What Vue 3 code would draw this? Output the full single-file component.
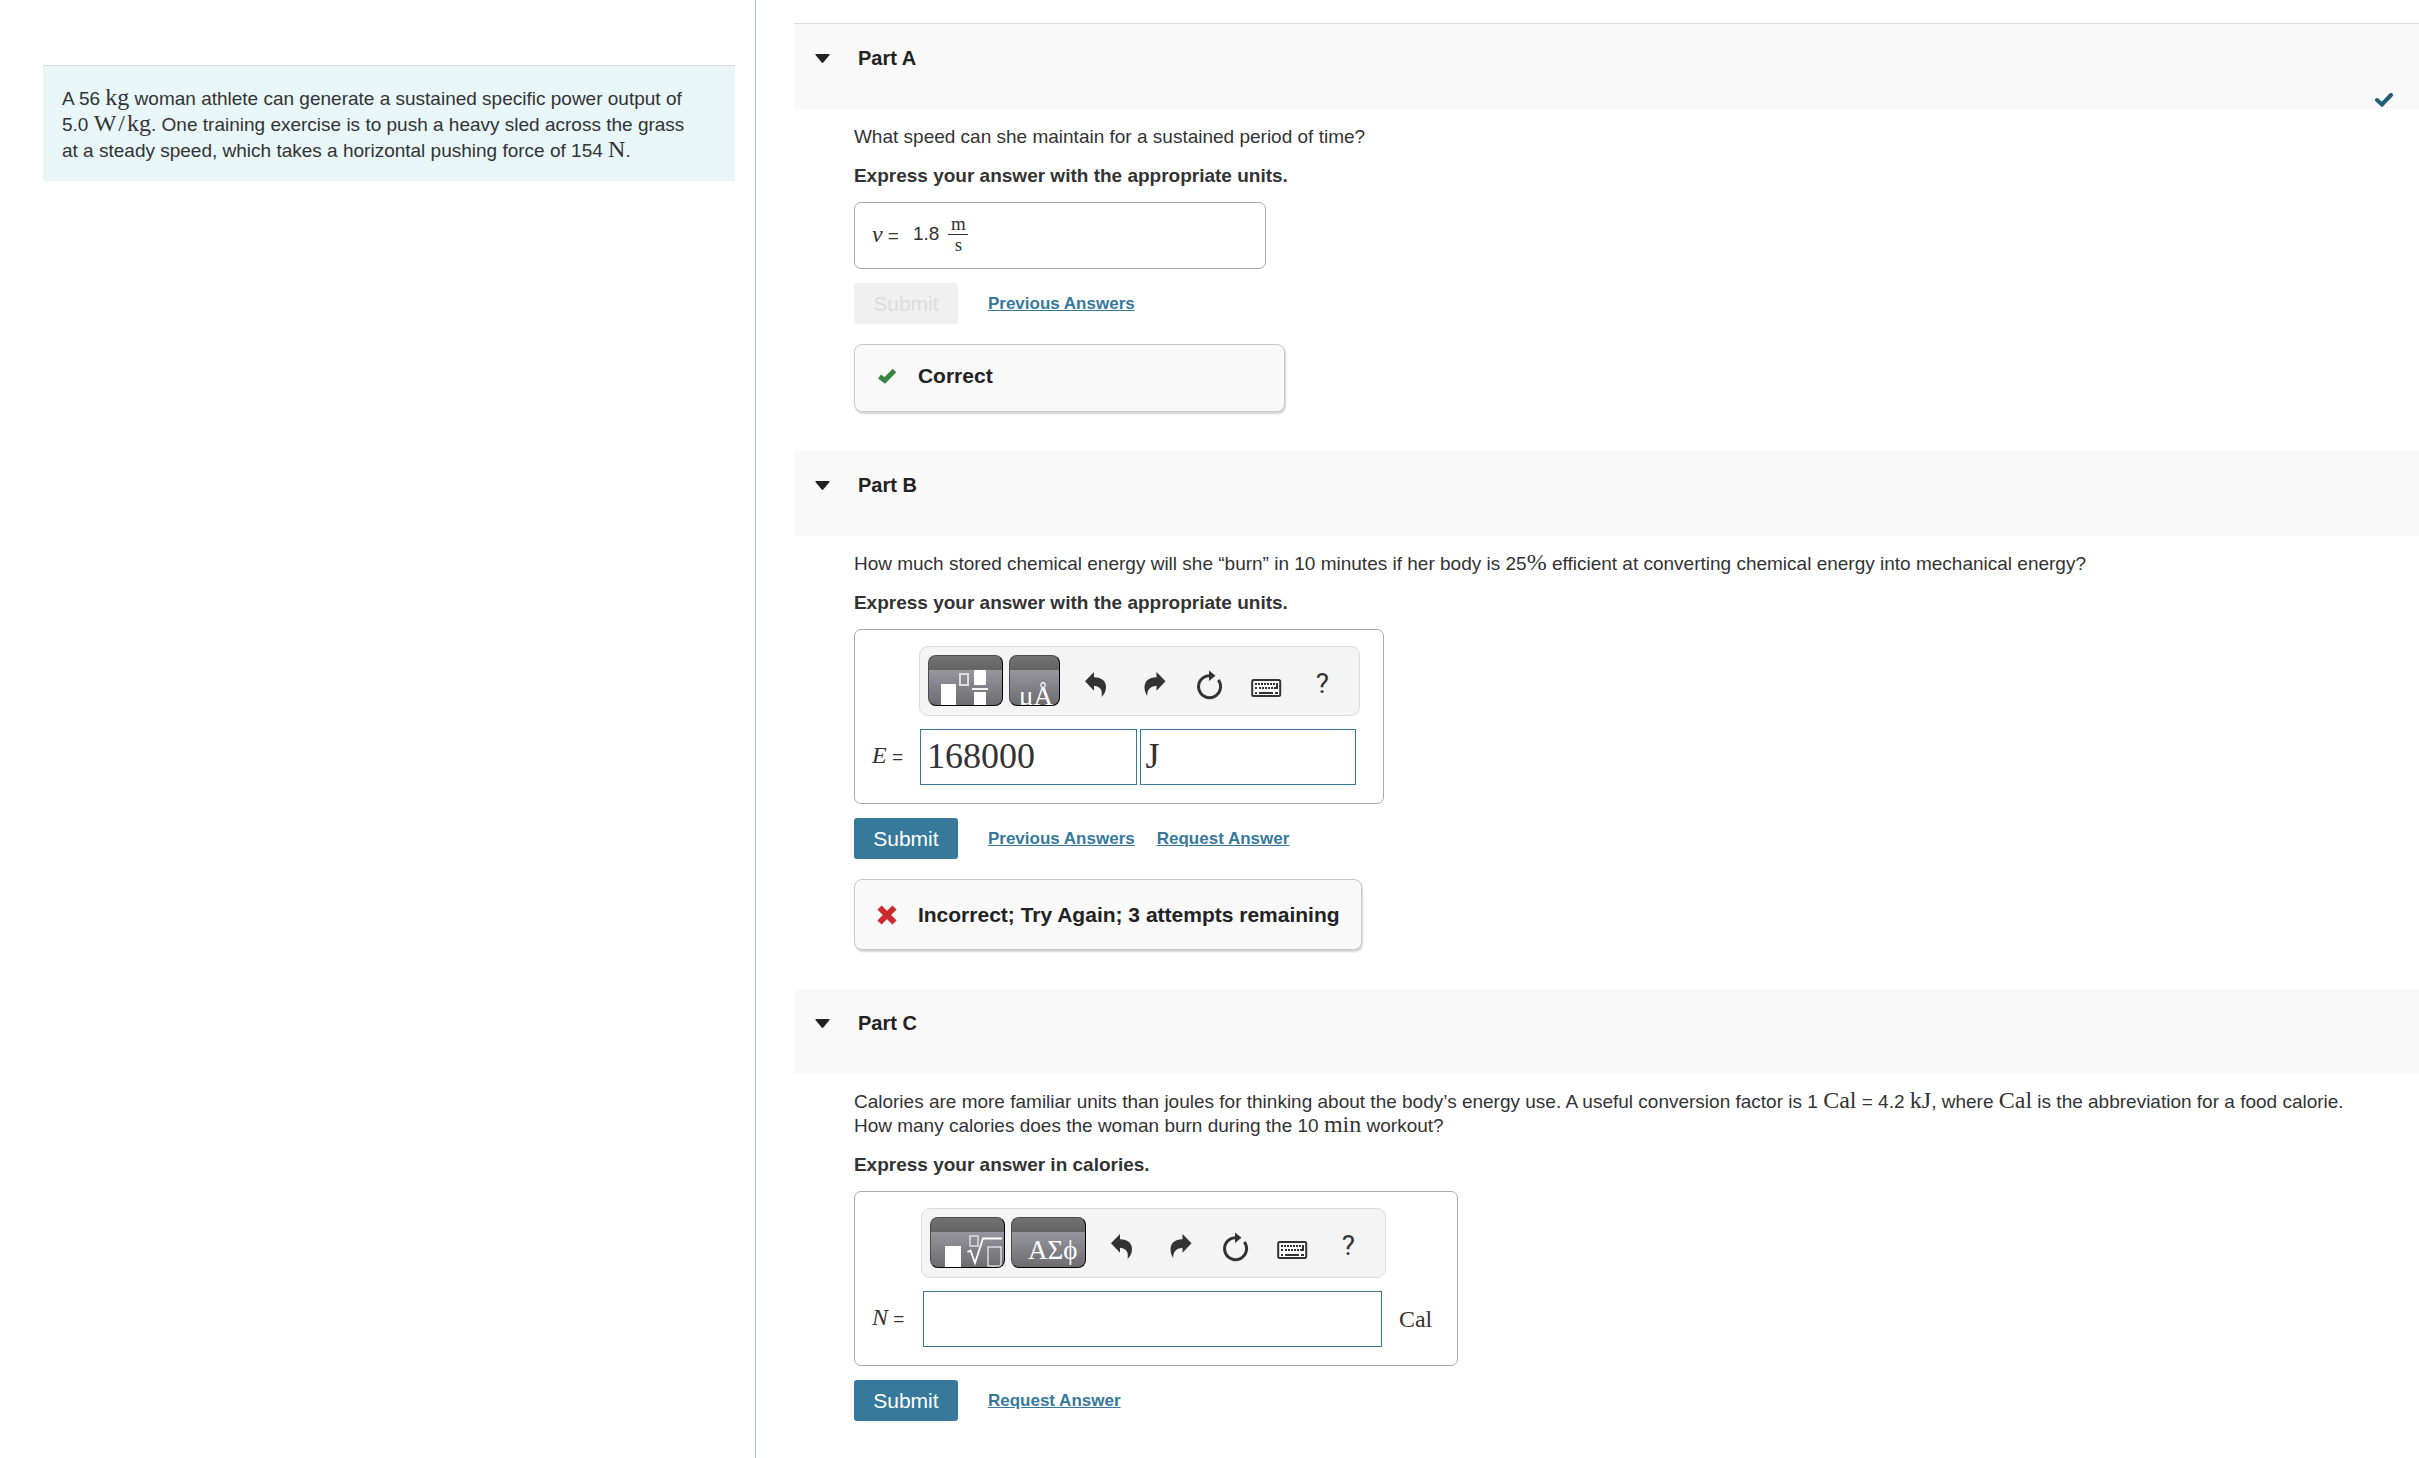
<script setup>
import { ref } from 'vue'

const energyValue = ref('168000')
const energyUnit = ref('J')
const calories = ref('')

const parts = [
  { id: 'a', title: 'Part A', done: true },
  { id: 'b', title: 'Part B', done: false },
  { id: 'c', title: 'Part C', done: false },
]
const tools = ['Undo', 'Redo', 'Reset', 'Keyboard shortcuts']
const keyRows = [
  { y: 28, xs: [18, 21, 24, 27, 30, 33, 36] },
  { y: 32, xs: [18, 22, 25, 28, 31, 34] },
  { y: 37, xs: [18] },
]
</script>

<template>
  <div class="page">
    <aside class="intro">
      <p class="problem">
        A 56 <span class="math">kg</span> woman athlete can generate a sustained specific power output of
        5.0 <span class="math">W<span class="slash">/</span>kg</span>. One training exercise is to push a heavy sled across the grass
        at a steady speed, which takes a horizontal pushing force of 154 <span class="math">N</span>.
      </p>
    </aside>

    <main class="parts">
      <section v-for="part in parts" :key="part.id" class="part">
        <header class="part-head" :class="{ first: part.id === 'a' }">
          <h2>
            <button type="button" class="toggle" aria-expanded="true">
              <svg width="15" height="9" viewBox="0 0 15 9" aria-hidden="true"><path d="M1 0h13q1 0 .5 1L8.300 8.500q-.8.8-1.600 0L.5 1Q0 0 1 0z" fill="#222" /></svg>
              {{ part.title }}
            </button>
          </h2>
          <svg v-if="part.done" class="done" width="18" height="14" viewBox="0 0 18 14" role="img" aria-label="Completed">
            <path d="M2 7l5 4.500L16 2" fill="none" stroke="#225f77" stroke-width="4" stroke-linecap="round" />
          </svg>
        </header>

        <div class="part-body">
          <p v-if="part.id === 'a'" class="question">What speed can she maintain for a sustained period of time?</p>
          <p v-else-if="part.id === 'b'" class="question">
            How much stored chemical energy will she “burn” in 10 minutes if her body is 25<span class="math">%</span> efficient at converting chemical energy into mechanical energy?
          </p>
          <p v-else class="question">
            Calories are more familiar units than joules for thinking about the body’s energy use. A useful conversion factor is 1 <span class="math">Cal</span> = 4.2 <span class="math">kJ</span>, where <span class="math">Cal</span> is the abbreviation for a food calorie.<br />
            How many calories does the woman burn during the 10 <span class="math">min</span> workout?
          </p>
          <p class="instruction">
            {{ part.id === 'c' ? 'Express your answer in calories.' : 'Express your answer with the appropriate units.' }}
          </p>

          <div v-if="part.id === 'a'" class="answer fixed">
            <span class="symbol"><i class="math">v</i> =</span>
            <span class="value">1.8</span>
            <span class="fraction"><span>m</span><span>s</span></span>
          </div>

          <div v-else class="answer editor" :class="{ suffixed: part.id === 'c' }">
            <div class="toolbar" role="toolbar">
              <template v-if="part.id === 'b'">
                <button type="button" class="pad wide" aria-label="Templates">
                  <svg width="73" height="49" viewBox="1 1 73 49" aria-hidden="true">
                    <path d="M13 29h15v22H13zM46 15h12v15H46zM46 37h12v14H46z" fill="#fff" />
                    <path d="M44 34h16" stroke="#f4f4f4" stroke-width="2" />
                    <rect x="32" y="19" width="8" height="11" fill="none" stroke="#ddd" stroke-width="2" />
                  </svg>
                </button>
                <button type="button" class="pad units" aria-label="Units"><span>μÅ</span></button>
              </template>
              <template v-else>
                <button type="button" class="pad wide" aria-label="Templates">
                  <svg width="73" height="49" viewBox="1 1 73 49" aria-hidden="true">
                    <path d="M15 29h16v22H15z" fill="#fff" />
                    <rect x="40" y="19" width="8" height="10" fill="none" stroke="#ddd" stroke-width="1.500" />
                    <path d="M37.500 35l3-1.500L45 46l8-24.500h19" fill="none" stroke="#fff" stroke-width="1.800" />
                    <rect x="58" y="30" width="13" height="19" fill="none" stroke="#ddd" stroke-width="1.500" />
                  </svg>
                </button>
                <button type="button" class="pad wide greek" aria-label="Greek letters"><span>ΑΣϕ</span></button>
              </template>
              <button v-for="tool in tools" :key="tool" type="button" class="tool" :aria-label="tool">
                <svg width="57" height="51" viewBox="0 0 57 51" aria-hidden="true">
                  <path v-if="tool === 'Undo'" d="M19 26.300L28 17v5.300C36 22.500 40 26.500 40 32c0 4-1.500 7-4.400 10 1-6.500-.6-10.500-7.600-11.300v5z" fill="#333" />
                  <path v-else-if="tool === 'Redo'" d="M42.500 26.300L33.500 17v5.300C25.500 22.500 21.500 26.500 21.500 32c0 4 1.200 6.500 2.600 9 .2-6 2.400-9.500 9.400-10.300v5z" fill="#333" />
                  <template v-else-if="tool === 'Reset'">
                    <path d="M38.300 25A11 11 0 1 1 29 20.700" fill="none" stroke="#333" stroke-width="3" />
                    <path d="M29 15.500l6.500 5.200L29 26z" fill="#333" />
                  </template>
                  <template v-else>
                    <rect x="15.200" y="25" width="28" height="16" rx="1.500" fill="#fff" stroke="#333" stroke-width="2" />
                    <template v-for="row in keyRows" :key="row.y">
                      <rect v-for="x in row.xs" :key="x" :x="x" :y="row.y" width="2" height="2" fill="#333" />
                    </template>
                    <path d="M39 28h2v6h-4v-2h2zM22 37h14v2H22zM38 37h3v2h-3z" fill="#333" />
                  </template>
                </svg>
              </button>
              <button type="button" class="tool help" aria-label="Help">?</button>
            </div>

            <template v-if="part.id === 'b'">
              <label class="symbol" for="energy"><i class="math">E</i> =</label>
              <div class="fields">
                <input id="energy" v-model="energyValue" type="text" />
                <input v-model="energyUnit" class="unit-field" type="text" aria-label="Energy unit" />
              </div>
            </template>
            <template v-else>
              <label class="symbol" for="calories"><i class="math">N</i> =</label>
              <div class="fields single">
                <input id="calories" v-model="calories" type="text" />
              </div>
              <span class="math suffix">Cal</span>
            </template>
          </div>

          <div class="actions">
            <button type="button" class="submit" :disabled="part.done">Submit</button>
            <a v-if="part.id !== 'c'" href="#">Previous Answers</a>
            <a v-if="part.id !== 'a'" href="#">Request Answer</a>
          </div>

          <div v-if="part.id === 'a'" class="result correct" role="status">
            <svg width="20" height="16" viewBox="0 0 20 16" aria-hidden="true">
              <path d="M2.500 8.500l5.300 4L17.500 2.500" fill="none" stroke="#388541" stroke-width="5" />
            </svg>
            Correct
          </div>
          <div v-else-if="part.id === 'b'" class="result incorrect" role="status">
            <svg width="20" height="20" viewBox="0 0 20 20" aria-hidden="true">
              <path d="M2.500 2.500l15 15M17.500 2.500l-15 15" fill="none" stroke="#cc2a2e" stroke-width="6" />
            </svg>
            Incorrect; Try Again; 3 attempts remaining
          </div>
        </div>
      </section>
    </main>
  </div>
</template>

<style>
body {
  margin: 0;
  background: #fff;
}
</style>

<style scoped>
* {
  box-sizing: border-box;
}
.page {
  display: flex;
  min-height: 100vh;
  font-family: "Liberation Sans", Arial, sans-serif;
  font-size: 19px;
  line-height: 24px;
  color: #333;
}
p,
h2 {
  margin: 0;
}
button,
input {
  font: inherit;
  color: inherit;
}
button {
  cursor: pointer;
}
.math {
  font-family: "Liberation Serif", "Times New Roman", serif;
  font-size: 24px;
  line-height: 20px;
}
.slash {
  padding: 0 2px;
}

.intro {
  flex: none;
  width: 31.25%;
  padding: 65px 20px 0 43px;
  border-right: 1px solid #b9c6d2;
}
.problem {
  padding: 20px 32px 17px 19px;
  border-top: 1px solid #d6dfdd;
  background: #e8f6f7;
  line-height: 26px;
}

.parts {
  flex: 1;
  min-width: 0;
  padding: 23px 0 0 38px;
}
.part-head {
  display: flex;
  justify-content: space-between;
  height: 85px;
  padding: 22px 26px 2px 21px;
  background: #f9f9f9;
}
.part-head.first {
  height: 86px;
  border-top: 1px solid #dcdcdc;
}
.part-head h2 {
  font-size: 20px;
  line-height: 24px;
}
.toggle {
  display: flex;
  align-items: center;
  gap: 28px;
  padding: 0;
  border: 0;
  background: none;
  color: #222;
  font-weight: bold;
}
.done {
  align-self: flex-end;
}
.part-body {
  display: flex;
  flex-direction: column;
  align-items: flex-start;
  padding: 16px 0 39px 60px;
}
.instruction {
  margin-top: 15px;
  font-weight: bold;
}

.answer {
  margin: 14px 0;
  border: 1px solid #a9a9a9;
  border-radius: 7px;
}
.fixed {
  display: flex;
  align-items: center;
  width: 412px;
  height: 67px;
  padding-left: 17px;
}
.symbol {
  white-space: nowrap;
}
.fixed .value {
  margin: 0 9px 4px 14px;
}
.fraction {
  display: flex;
  flex-direction: column;
  width: 20px;
  padding-bottom: 2px;
  font-family: "Liberation Serif", serif;
  line-height: 20px;
  text-align: center;
}
.fraction span + span {
  border-top: 1px solid #333;
}
.editor {
  display: grid;
  grid-template-columns: 47px auto auto;
  align-items: center;
  row-gap: 13px;
  padding: 16px 23px 18px 17px;
}
.editor.suffixed {
  grid-template-columns: 49px auto auto;
  padding-right: 25px;
}
.toolbar {
  grid-column: 2;
  display: flex;
  gap: 6px;
  height: 70px;
  padding: 8px;
  border: 1px solid #dcdcdc;
  border-radius: 9px;
  background: #f4f4f4;
}
.editor .symbol {
  grid-column: 1;
}
.pad {
  display: flex;
  flex: none;
  width: 51px;
  height: 51px;
  padding: 0;
  overflow: hidden;
  border: 1px solid #000;
  border-top-color: #4c4c4c;
  border-left-color: #4c4c4c;
  border-radius: 8px;
  background: linear-gradient(#727272, #646464 14px, #97959e 14px, #6d6c70);
  color: #fff;
  font-family: "Liberation Serif", serif;
  font-size: 27px;
}
.pad.wide {
  width: 75px;
}
.pad.units {
  padding: 28px 0 0 9px;
}
.pad.greek {
  padding: 20px 0 0 16px;
}
.tool {
  flex: none;
  width: 57px;
  height: 51px;
  padding: 0;
  border: 0;
  background: none;
}
.tool + .tool {
  margin-left: -6px;
}
.help {
  padding-top: 6px;
  font-family: Roboto, sans-serif;
  font-size: 28px;
}
.fields {
  display: flex;
  gap: 3px;
  padding: 0 4px 0 1px;
}
.fields.single {
  padding-left: 2px;
}
.fields input {
  flex: 1;
  width: 0;
  min-width: 0;
  height: 56px;
  padding: 0 6px 2px;
  border: 1px solid #367a9c;
  border-radius: 0;
  background: #fff;
  font-family: "Liberation Serif", "Times New Roman", serif;
  font-size: 36px;
}
.fields .unit-field {
  padding-left: 4px;
}
.suffix {
  margin-left: 13px;
}

.actions {
  display: flex;
  align-items: center;
  gap: 22px;
}
.submit {
  width: 104px;
  height: 41px;
  margin-right: 8px;
  padding: 0;
  border: 0;
  border-radius: 3px;
  background: #36799b;
  color: #fff;
  font-size: 21px;
}
.submit:disabled {
  background: #f0f0f0;
  color: #dcdcdc;
}
.actions a {
  color: #36799b;
  font-size: 17px;
  font-weight: bold;
}
.result {
  display: flex;
  align-items: center;
  gap: 21px;
  margin-top: 20px;
  padding: 0 21px 4px 22px;
  border: 1px solid #c8c8c8;
  border-radius: 8px;
  background: #f9f9f9;
  box-shadow: 1px 2px 2px #d4d4d4;
  color: #222;
  font-size: 21px;
  font-weight: bold;
}
.correct {
  width: 431px;
  height: 68px;
}
.incorrect {
  height: 71px;
  padding-bottom: 0;
}
</style>
